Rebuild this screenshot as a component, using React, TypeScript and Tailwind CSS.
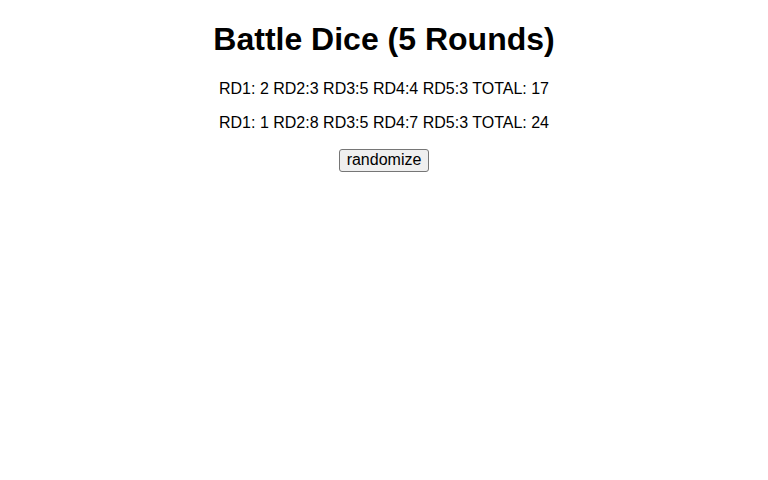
import { useState } from "react"

const ROUNDS = 5

// Two players, five rounds each — values as first dealt
const initial = [
  [2, 3, 5, 4, 3],
  [1, 8, 5, 7, 3],
]

function roll() {
  return Array.from({ length: ROUNDS }, () => Math.floor(Math.random() * 10))
}

function ScoreLine({ rolls }: { rolls: number[] }) {
  const total = rolls.reduce((a, b) => a + b, 0)
  return (
    <p className="my-4 text-base leading-[1.15]">
      RD1: {rolls[0]} RD2:{rolls[1]} RD3:{rolls[2]} RD4:{rolls[3]} RD5:{rolls[4]} TOTAL: {total}
    </p>
  )
}

export default function App() {
  const [players, setPlayers] = useState(initial)

  return (
    <div className="min-h-screen bg-white pt-[21.44px] text-center text-black [font-family:'Liberation_Sans',Arial,sans-serif]">
      <h1 className="mb-[21.44px] text-[32px] font-bold leading-[1.15]">Battle Dice (5 Rounds)</h1>
      {players.map((rolls, i) => (
        <ScoreLine key={i} rolls={rolls} />
      ))}
      <div>
        <button
          className="rounded-[3px] border border-[#767676] bg-[#efefef] px-[7px] py-px text-base leading-[1.15] text-black hover:bg-[#e5e5e5]"
          onClick={() => setPlayers([roll(), roll()])}
        >
          randomize
        </button>
      </div>
    </div>
  )
}
